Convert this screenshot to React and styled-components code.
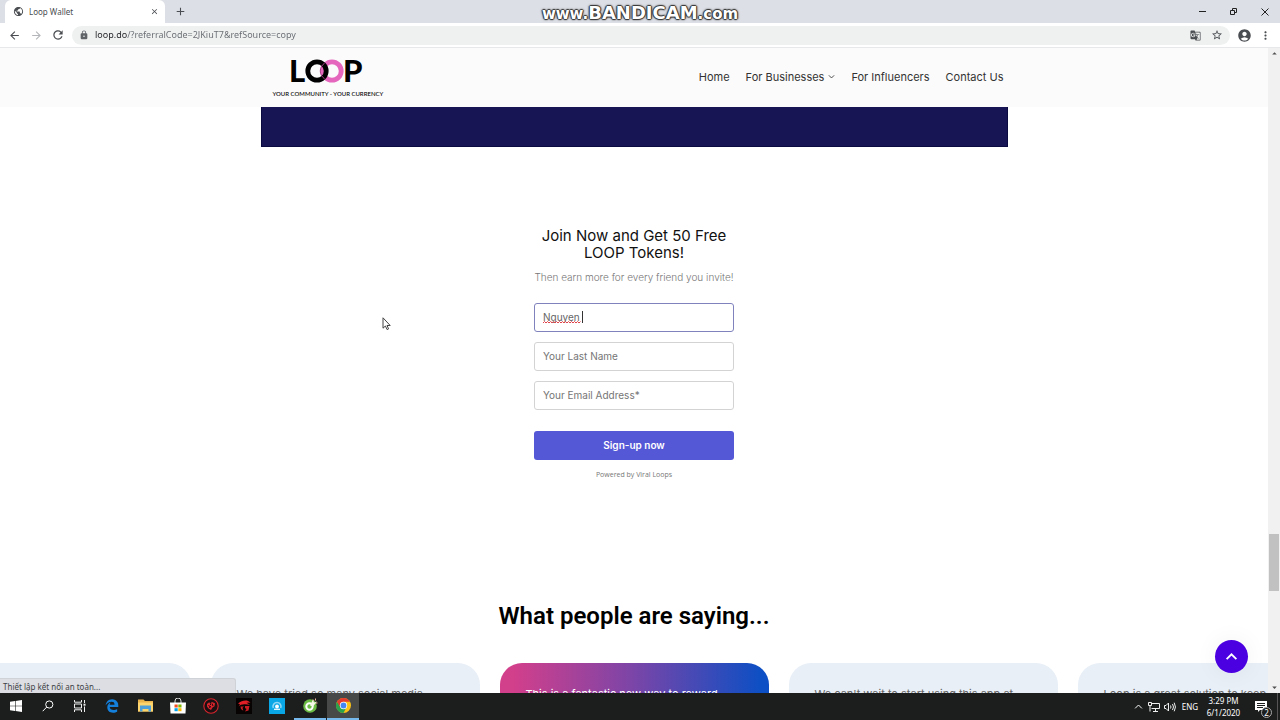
import React from 'react';
import styled, { createGlobalStyle, css } from 'styled-components';
import {
  MdAccountCircle,
  MdAdd,
  MdArrowBack,
  MdArrowDropDown,
  MdArrowDropUp,
  MdArrowForward,
  MdClose,
  MdGTranslate,
  MdLock,
  MdMoreVert,
  MdPublic,
  MdRefresh,
  MdStarBorder,
} from 'react-icons/md';
import { FaEdgeLegacy } from 'react-icons/fa6';

const GlobalStyle = createGlobalStyle`
  * {
    box-sizing: border-box;
  }

  body {
    margin: 0;
    background: #fff;
    font-family: 'Noto Sans', 'Open Sans', sans-serif;
  }

  button, input {
    font-family: inherit;
  }
`;

const Desktop = styled.div`
  display: flex;
  flex-direction: column;
  height: 100vh;
  overflow: hidden;
`;

/* ---------- browser window ---------- */

const IconButton = styled.button`
  display: flex;
  align-items: center;
  justify-content: center;
  flex: none;
  width: ${(props) => props.$width || 22}px;
  height: 20px;
  padding: 0;
  border: 0;
  background: none;
  color: ${(props) => props.$color || '#4a4d51'};
  cursor: pointer;
`;

const TabStrip = styled.div`
  display: flex;
  align-items: center;
  height: 23px;
  padding-left: 5px;
  background: #dcdfe5;
`;

const Tab = styled.div`
  display: flex;
  align-items: center;
  gap: 5px;
  width: 160px;
  height: 23px;
  padding: 0 0 0 8px;
  border-radius: 6px 6px 0 0;
  background: #fff;
  color: #4a4d51;
`;

const TabTitle = styled.span`
  flex: 1;
  font-size: 8px;
  line-height: 12px;
`;

const WindowButtons = styled.div`
  display: flex;
  margin-left: auto;
`;

const Toolbar = styled.div`
  display: flex;
  align-items: center;
  height: 25px;
  padding: 0 6px 0 3px;
  border-bottom: 1px solid #e6e8ea;
  background: #fff;
`;

const AddressBar = styled.div`
  display: flex;
  align-items: center;
  flex: 1;
  height: 19px;
  margin: 0 2px 0 3px;
  padding: 0 2px 0 7px;
  border-radius: 10px;
  background: #eff1f1;
  color: #5f6368;
`;

const AddressInput = styled.input`
  flex: 1;
  margin-left: 6px;
  padding: 0;
  border: 0;
  outline: 0;
  background: linear-gradient(90deg, #202124 32px, #676b70 32px);
  background-clip: text;
  -webkit-text-fill-color: transparent;
  font-size: 9px;
  line-height: 14px;
`;

const Watermark = styled.div`
  position: absolute;
  top: 3px;
  left: 50%;
  transform: translateX(-50%);
  color: #fff;
  font-family: 'DejaVu Sans', sans-serif;
  font-size: 15px;
  font-weight: bold;
  line-height: 20px;
  white-space: nowrap;
  text-shadow: 1px 0 1px #333, -1px 0 1px #333, 0 1px 1px #333, 0 -1px 1px #333, 0 0 3px #444;
`;

const WatermarkBig = styled.span`
  font-size: 18px;
`;

const Viewport = styled.div`
  position: relative;
  display: flex;
  flex: 1;
  min-height: 0;
`;

const Scrollbar = styled.div`
  display: flex;
  flex-direction: column;
  align-items: center;
  width: 12px;
  background: #f1f1f1;
  color: #505050;
`;

const ScrollTrack = styled.div`
  display: flex;
  flex: 1;
  flex-direction: column;
  width: 10px;

  &::before {
    content: '';
    flex: 474;
  }

  &::after {
    content: '';
    flex: 91;
  }
`;

const ScrollThumb = styled.div`
  flex: 57;
  background: #c1c1c1;
`;

const StatusBubble = styled.div`
  position: absolute;
  bottom: 0;
  left: 0;
  width: 236px;
  height: 15px;
  padding: 0 3px;
  border: 1px solid #cfd2d6;
  border-width: 1px 1px 0 0;
  border-radius: 0 3px 0 0;
  background: #dcdee3;
  color: #3f4246;
  font-size: 8px;
  line-height: 15px;
`;

/* ---------- page ---------- */

const Page = styled.div`
  position: relative;
  display: flex;
  flex: 1;
  flex-direction: column;
  min-width: 0;
  overflow: hidden;
`;

const SiteHeader = styled.header`
  flex: none;
  background: #fbfbfb;
`;

const Container = styled.div`
  display: flex;
  align-items: center;
  justify-content: space-between;
  max-width: 747px;
  height: 59px;
  margin: 0 auto;
  padding: 0 4px 2px 12px;
`;

const LogoLink = styled.a`
  display: flex;
  flex-direction: column;
  align-items: center;
  gap: 5px;
  color: #000;
  text-decoration: none;
`;

const LogoMark = styled.svg`
  overflow: visible;
  font-family: Lato, sans-serif;
  font-size: 31px;
  font-weight: 900;
`;

const Tagline = styled.span`
  font-family: Lato, sans-serif;
  font-size: 6px;
  font-weight: 500;
  line-height: 10px;
`;

const Nav = styled.nav`
  display: flex;
  gap: 16px;
`;

const NavLink = styled.a`
  display: flex;
  align-items: center;
  gap: 4px;
  color: #333;
  font-family: Inter, sans-serif;
  font-size: 11px;
  line-height: 16px;
  text-decoration: none;
`;

const Banner = styled.div`
  flex: none;
  width: 100%;
  max-width: 747px;
  height: 40px;
  margin: 0 auto;
  border: 1px solid #0b0a40;
  border-top: 0;
  background: #181554;
`;

const SignUpForm = styled.form`
  display: flex;
  flex: none;
  flex-direction: column;
  width: 200px;
  margin: 80px auto 0;
  font-family: Inter, sans-serif;
  text-align: center;
`;

const FormTitle = styled.h2`
  margin: 0;
  color: #111;
  font-size: 15px;
  font-weight: 400;
  line-height: 17px;
`;

const FormText = styled.p`
  margin: 8px 0 18px;
  color: #777;
  font-size: 10px;
  font-weight: 300;
  line-height: 16px;
  white-space: nowrap;
`;

const Field = styled.div`
  position: relative;
  display: flex;
  margin-bottom: 10px;
`;

const TextInput = styled.input`
  width: 100%;
  height: 29px;
  padding: 0 8px 2px;
  border: 1px solid ${(props) => (props.$active ? '#7f82bd' : '#d3d3d3')};
  border-radius: 3px;
  outline: 0;
  background: #fff;
  color: #666;
  font-size: 10px;

  &::placeholder {
    color: #757575;
  }
`;

const SpellingMark = styled.svg`
  position: absolute;
  top: 18px;
  left: 9px;
`;

const Caret = styled.span`
  position: absolute;
  top: 8px;
  left: 48px;
  width: 1px;
  height: 12px;
  background: #333;
`;

const SubmitButton = styled.button`
  height: 29px;
  margin-top: 11px;
  padding: 0 0 2px;
  border: 0;
  border-radius: 3px;
  background: #5457d6;
  color: #fff;
  font-size: 10px;
  font-weight: 600;
  cursor: pointer;

  &:hover {
    opacity: 0.9;
  }
`;

const PoweredBy = styled.a`
  margin-top: 10px;
  color: #777;
  font-family: 'Open Sans', sans-serif;
  font-size: 7px;
  line-height: 10px;
  text-decoration: none;
`;

const SectionTitle = styled.h2`
  flex: none;
  margin: 120px 0 31px;
  color: #000;
  font-family: Roboto, sans-serif;
  font-size: 24px;
  font-weight: 600;
  line-height: 32px;
  text-align: center;
`;

const Carousel = styled.div`
  display: flex;
  flex: none;
  gap: 20px;
  justify-content: center;
`;

const Quote = styled.blockquote`
  flex: none;
  width: 269px;
  min-height: 160px;
  margin: 0;
  padding: 23px 26px;
  border-radius: 22px;
  background: #e8eff7;
  color: #666;
  font-family: Inter, sans-serif;
  font-size: 11px;
  line-height: 16px;

  ${(props) =>
    props.$featured &&
    css`
      background: linear-gradient(90deg, #d23f8b 5%, #7a45a8 50%, #0d4fc4 97%);
      color: #fff;
    `}
`;

const BackToTop = styled.button`
  position: absolute;
  right: 20px;
  bottom: 20px;
  display: flex;
  align-items: center;
  justify-content: center;
  width: 33px;
  height: 33px;
  padding: 0;
  border: 0;
  border-radius: 50%;
  background: #4a00e0;
  box-shadow: 0 0 24px rgba(0, 0, 0, 0.06);
  cursor: pointer;
`;

const Pointer = styled.svg`
  position: absolute;
  top: 317px;
  left: 382px;
`;

/* ---------- taskbar ---------- */

const Taskbar = styled.div`
  display: flex;
  flex: none;
  height: 27px;
  background: #1c1e1e;
  color: #fff;
`;

const TaskGroup = styled.div`
  display: flex;
  gap: ${(props) => props.$gap || 0}px;
`;

const TaskButton = styled.button`
  display: flex;
  align-items: center;
  justify-content: center;
  width: 32px;
  padding: 0;
  border: 0;
  border-bottom: 2px solid ${(props) => (props.$running ? '#76b9ed' : 'transparent')};
  background: ${(props) => (props.$active ? '#474949' : 'none')};
  color: inherit;
`;

const Tray = styled.div`
  display: flex;
  align-items: center;
  margin-left: auto;
`;

const TrayButton = styled.button`
  position: relative;
  display: flex;
  align-items: center;
  justify-content: center;
  width: ${(props) => props.$width || 16}px;
  height: 27px;
  padding: 0;
  border: 0;
  background: none;
  color: inherit;
  font-size: 8px;
  line-height: 12px;
`;

const ShowDesktop = styled.button`
  width: 3px;
  height: 27px;
  padding: 0;
  border: 0;
  border-left: 1px solid #555;
  background: none;
`;

const Badge = styled.span`
  position: absolute;
  right: 5px;
  bottom: 2px;
  width: 11px;
  height: 11px;
  border: 1px solid #aaa;
  border-radius: 50%;
  background: #1c1e1e;
  font-size: 8px;
  line-height: 9px;
`;

const navItems = [
  { label: 'Home' },
  { label: 'For Businesses', menu: true },
  { label: 'For Influencers' },
  { label: 'Contact Us' },
];

const quotes = [
  { text: '' },
  { text: 'We have tried so many social media' },
  { text: 'This is a fantastic new way to reward', featured: true },
  { text: "We can't wait to start using this app at" },
  { text: 'Loop is a great solution to keep' },
];

const Logo = () => (
  <LogoMark width="74" height="30" viewBox="0 0 74 30">
    <text x="-2" y="28">
      L
    </text>
    <circle cx="41" cy="17" r="9.2" fill="none" stroke="#e567bd" strokeWidth="4.8" />
    <circle cx="26" cy="17" r="9.2" fill="none" stroke="#000" strokeWidth="4.8" />
    <path d="M33.6 9.200a9.200 9.200 0 0 0 0 15.600" fill="none" stroke="#a83f88" strokeWidth="1" />
    <text x="52" y="28">
      P
    </text>
  </LogoMark>
);

const Chevron = ({ up, size, color = 'currentColor', weight = 1 }) => (
  <svg width={size} height={size} viewBox="0 0 12 12" fill="none" stroke={color} strokeWidth={weight}>
    <path d={up ? 'M1.5 8.5 6 4l4.5 4.5' : 'M1.5 4 6 8.5 10.5 4'} />
  </svg>
);

const WindowsIcon = () => (
  <svg width="12" height="12" viewBox="0 0 12 12" fill="#fff">
    <path d="M0 1.8 5 1v4.7H0zM5.6.9 12 0v5.7H5.6zM0 6.3h5V11l-5-.8zM5.6 6.3H12V12l-6.4-.9z" />
  </svg>
);

const SearchIcon = () => (
  <svg width="12" height="12" viewBox="0 0 12 12" fill="none" stroke="#fff">
    <circle cx="7.3" cy="4.5" r="3.6" />
    <path d="M4.7 7.1.7 11.2" />
  </svg>
);

const TaskViewIcon = () => (
  <svg width="12" height="12" viewBox="0 0 12 12" fill="none" stroke="#eee">
    <path d="M.5 0v2.2h7V0M.5 12V9.8h7V12M.5 4h7v4h-7zM10.5 0v3M10.5 6.5V12" />
    <path d="M9.5 4.7h2" strokeWidth="2" />
  </svg>
);

const FolderIcon = () => (
  <svg width="15" height="13" viewBox="0 0 15 13">
    <path d="M0 .5h5.5L7 2h8v10.5H0z" fill="#e9b44c" />
    <path d="M0 3.5h15v9H0z" fill="#fcd56f" />
    <path d="M2 6.5h11v6h-2.5V10h-6v2.5H2z" fill="#4c9fd8" />
  </svg>
);

const StoreIcon = () => (
  <svg width="16" height="16" viewBox="0 0 16 16">
    <path d="M5 5V3a3 3 0 0 1 6 0v2" fill="none" stroke="#ddd" />
    <path d="M0 4.5h16l-.5 11H.5z" fill="#fff" />
    <path d="M4.5 6.5h3.2v3H4.5z" fill="#f25022" />
    <path d="M8.3 6.5h3.2v3H8.3z" fill="#7fba00" />
    <path d="M4.5 10.2h3.2v3H4.5z" fill="#00a4ef" />
    <path d="M8.3 10.2h3.2v3H8.3z" fill="#ffb900" />
  </svg>
);

const RedRingIcon = () => (
  <svg width="16" height="16" viewBox="0 0 16 16">
    <circle cx="8" cy="8" r="7.2" fill="#1c1012" stroke="#d8242c" strokeWidth="1.1" />
    <path d="M4 6 6.2 4.2l1 1.2L9 4l3 1.2-.5 3-2 1.3L8 12l-2.5-1.5L4 8.5z" fill="#d8242c" />
    <path d="M5.5 7l2 2.3M9 5.5l1 2.5M7.5 5.5V7M6 9.5l2-1" stroke="#24090b" />
  </svg>
);

const DragonIcon = () => (
  <svg width="16" height="16" viewBox="0 0 16 16">
    <path d="M0 0h16v16H0z" fill="#080303" />
    <path d="M2 5.500C5 3 9 2 12 3l2.500 1.500-4 .3 3.500 2-5-.6C6.500 6 4 6.800 2.500 8.500L4 6.200z" fill="#e02026" />
    <path d="M4.500 8.500h3.500L6.500 9.800l.8 3L5 11zM9 8h4.500l-1 4.500-3.500 1L10.500 11 9 10z" fill="#c81c22" />
  </svg>
);

const BlueTileIcon = () => (
  <svg width="16" height="16" viewBox="0 0 16 16">
    <path d="M0 0h16v16H0z" fill="#0aa7e6" />
    <path d="M4.3 10a4 4 0 1 1 7.4 0" fill="none" stroke="#8fd8f6" strokeWidth="1.5" />
    <circle cx="8" cy="8.5" r="1.9" fill="#fff" />
    <path d="M5 11.3h6" stroke="#e6f7fe" strokeWidth="1.3" />
  </svg>
);

const GreenDiscIcon = () => (
  <svg width="15" height="15" viewBox="0 0 15 15">
    <circle cx="7" cy="8" r="6.8" fill="#6cbb45" />
    <circle cx="6.5" cy="8.5" r="3.2" fill="none" stroke="#fff" strokeWidth="2" />
    <path d="m7 7.5 3-6 1 3 3-1-4 5z" fill="#f5f8e8" />
    <path d="M10 1.5 11 3M12.5.5v2M14.5 5h-2" stroke="#f0b9a0" />
  </svg>
);

const ChromeIcon = () => (
  <svg width="15" height="15" viewBox="0 0 16 16">
    <circle cx="8" cy="8" r="8" fill="#fbc116" />
    <path d="M8 8H4.5L1.07 4A8 8 0 0 0 8 16l3-6z" fill="#2ba24c" />
    <path d="M8 4h6.93A8 8 0 0 0 1.07 4L4.5 10z" fill="#e33b2e" />
    <circle cx="8" cy="8" r="3.9" fill="#fff" />
    <circle cx="8" cy="8" r="3.1" fill="#4285f4" />
  </svg>
);

const apps = [
  { name: 'Edge', icon: <FaEdgeLegacy size={14} color="#1480dc" /> },
  { name: 'Explorer', icon: <FolderIcon /> },
  { name: 'Store', icon: <StoreIcon /> },
  { name: 'Games', icon: <RedRingIcon /> },
  { name: 'Garena', icon: <DragonIcon /> },
  { name: 'Control', icon: <BlueTileIcon /> },
  { name: 'Browser', icon: <GreenDiscIcon />, running: true },
  { name: 'Chrome', icon: <ChromeIcon />, running: true, active: true },
];

const BrowserChrome = () => (
  <>
    <TabStrip>
      <Tab>
        <MdPublic size={11} />
        <TabTitle>Loop Wallet</TabTitle>
        <IconButton aria-label="Close tab">
          <MdClose size={9} />
        </IconButton>
      </Tab>
      <IconButton $width={30} aria-label="New tab">
        <MdAdd size={13} />
      </IconButton>
      <WindowButtons>
        <IconButton $width={30} $color="#222" aria-label="Minimize">
          <svg width="8" height="8" stroke="currentColor">
            <path d="M0 3.5h7" />
          </svg>
        </IconButton>
        <IconButton $width={31} $color="#222" aria-label="Restore">
          <svg width="8" height="8" fill="none" stroke="currentColor">
            <path d="M.5 2.5h4v4h-4zM2.5 2V.5h4v4H5" />
          </svg>
        </IconButton>
        <IconButton $width={31} $color="#222" aria-label="Close">
          <svg width="8" height="8" stroke="currentColor">
            <path d="m.5.5 7 7M7.5.5l-7 7" />
          </svg>
        </IconButton>
      </WindowButtons>
    </TabStrip>
    <Toolbar>
      <IconButton aria-label="Back">
        <MdArrowBack size={13} />
      </IconButton>
      <IconButton $color="#b4b6b9" aria-label="Forward">
        <MdArrowForward size={13} />
      </IconButton>
      <IconButton aria-label="Reload">
        <MdRefresh size={14} />
      </IconButton>
      <AddressBar>
        <MdLock size={10} />
        <AddressInput
          aria-label="Address"
          defaultValue="loop.do/?referralCode=2JKiuT7&refSource=copy"
        />
        <IconButton aria-label="Translate">
          <MdGTranslate size={11} />
        </IconButton>
        <IconButton aria-label="Bookmark">
          <MdStarBorder size={12} />
        </IconButton>
      </AddressBar>
      <IconButton $width={24} aria-label="Profile">
        <MdAccountCircle size={15} />
      </IconButton>
      <IconButton $width={18} aria-label="Menu">
        <MdMoreVert size={13} />
      </IconButton>
    </Toolbar>
  </>
);

class SignUp extends React.Component {
  constructor(props) {
    super(props);

    this.state = {
      firstName: 'Nguyen ',
      lastName: '',
      email: '',
    };
  }

  handleInputChange = (event) => {
    this.setState({ [event.target.name]: event.target.value });
  };

  handleSubmit = (event) => {
    event.preventDefault();
  };

  render() {
    return (
      <SignUpForm onSubmit={this.handleSubmit}>
        <FormTitle>Join Now and Get 50 Free LOOP Tokens!</FormTitle>
        <FormText>Then earn more for every friend you invite!</FormText>
        <Field>
          <TextInput
            $active
            type="text"
            name="firstName"
            aria-label="Your First Name"
            spellCheck={false}
            value={this.state.firstName}
            onChange={this.handleInputChange}
          />
          <SpellingMark width="38" height="3" fill="none" stroke="#e0444a">
            <path d="M0 2l1.5-1.5L3 2l1.5-1.5L6 2l1.5-1.5L9 2l1.5-1.5L12 2l1.5-1.5L15 2l1.5-1.5L18 2l1.5-1.5L21 2l1.5-1.5L24 2l1.5-1.5L27 2l1.5-1.5L30 2l1.5-1.5L33 2l1.5-1.5L36 2l1.5-1.5" />
          </SpellingMark>
          <Caret />
        </Field>
        <Field>
          <TextInput
            type="text"
            name="lastName"
            aria-label="Your Last Name"
            placeholder="Your Last Name"
            value={this.state.lastName}
            onChange={this.handleInputChange}
          />
        </Field>
        <Field>
          <TextInput
            type="email"
            name="email"
            aria-label="Your Email Address"
            placeholder="Your Email Address*"
            value={this.state.email}
            onChange={this.handleInputChange}
          />
        </Field>
        <SubmitButton type="submit">Sign-up now</SubmitButton>
        <PoweredBy href="#viral-loops">Powered by Viral Loops</PoweredBy>
      </SignUpForm>
    );
  }
}

const Site = () => (
  <Page>
    <SiteHeader>
      <Container>
        <LogoLink href="#home" aria-label="Loop">
          <Logo />
          <Tagline>YOUR COMMUNITY - YOUR CURRENCY</Tagline>
        </LogoLink>
        <Nav>
          {navItems.map((item) => (
            <NavLink key={item.label} href="#nav">
              {item.label}
              {item.menu && <Chevron size={7} weight={1.5} />}
            </NavLink>
          ))}
        </Nav>
      </Container>
    </SiteHeader>
    <Banner />
    <SignUp />
    <SectionTitle>What people are saying...</SectionTitle>
    <Carousel>
      {quotes.map((quote, index) => (
        <Quote key={index} $featured={quote.featured}>
          {quote.text}
        </Quote>
      ))}
    </Carousel>
    <BackToTop aria-label="Back to top">
      <Chevron up size={13} color="#fff" weight={1.7} />
    </BackToTop>
  </Page>
);

const WindowsTaskbar = () => (
  <Taskbar>
    <TaskGroup>
      <TaskButton aria-label="Start">
        <WindowsIcon />
      </TaskButton>
      <TaskButton aria-label="Search">
        <SearchIcon />
      </TaskButton>
      <TaskButton aria-label="Task view">
        <TaskViewIcon />
      </TaskButton>
    </TaskGroup>
    <TaskGroup $gap={1}>
      {apps.map((app) => (
        <TaskButton key={app.name} aria-label={app.name} $running={app.running} $active={app.active}>
          {app.icon}
        </TaskButton>
      ))}
    </TaskGroup>
    <Tray>
      <TrayButton aria-label="Hidden icons">
        <Chevron up size={9} weight={1.3} />
      </TrayButton>
      <TrayButton aria-label="Network">
        <svg width="12" height="10" fill="none" stroke="#eee">
          <path d="M4 1.5h7.5v5h-8M5 9.5h5M7.5 7v2M.5.5h3v3h-3zM2 3.5v6" />
        </svg>
      </TrayButton>
      <TrayButton aria-label="Volume">
        <svg width="12" height="10" fill="none" stroke="#eee">
          <path d="M.5 3.5H2L4.5 1v8L2 6.5H.5zM6.5 3.5q1 1.5 0 3M8.5 2q2 3 0 6M10.2.7q2.5 4.3 0 8.6" />
        </svg>
      </TrayButton>
      <TrayButton $width={24}>ENG</TrayButton>
      <TrayButton $width={43}>
        3:29 PM
        <br />
        6/1/2020
      </TrayButton>
      <TrayButton $width={32} aria-label="Notifications">
        <svg width="12" height="12" fill="#fff">
          <path d="M0 0h12v9H5L3 11V9H0z" />
          <path d="M2 2.5h8M2 4.5h8M2 6.5h6" stroke="#1c1e1e" />
        </svg>
        <Badge>2</Badge>
      </TrayButton>
      <ShowDesktop aria-label="Show desktop" />
    </Tray>
  </Taskbar>
);

const App = () => (
  <Desktop>
    <GlobalStyle />
    <BrowserChrome />
    <Viewport>
      <Site />
      <Scrollbar>
        <MdArrowDropUp size={11} />
        <ScrollTrack>
          <ScrollThumb />
        </ScrollTrack>
        <MdArrowDropDown size={11} />
      </Scrollbar>
      <StatusBubble>Thiết lập kết nối an toàn...</StatusBubble>
    </Viewport>
    <WindowsTaskbar />
    <Watermark>
      www.<WatermarkBig>BANDICAM</WatermarkBig>.com
    </Watermark>
    <Pointer width="10" height="14" viewBox="0 0 10 14" fill="#fff" stroke="#444">
      <path d="M1 .8v10.4L3.4 9l1.700 3.600 1.500-.7L5 8.500h3.200z" />
    </Pointer>
  </Desktop>
);

export default App;
